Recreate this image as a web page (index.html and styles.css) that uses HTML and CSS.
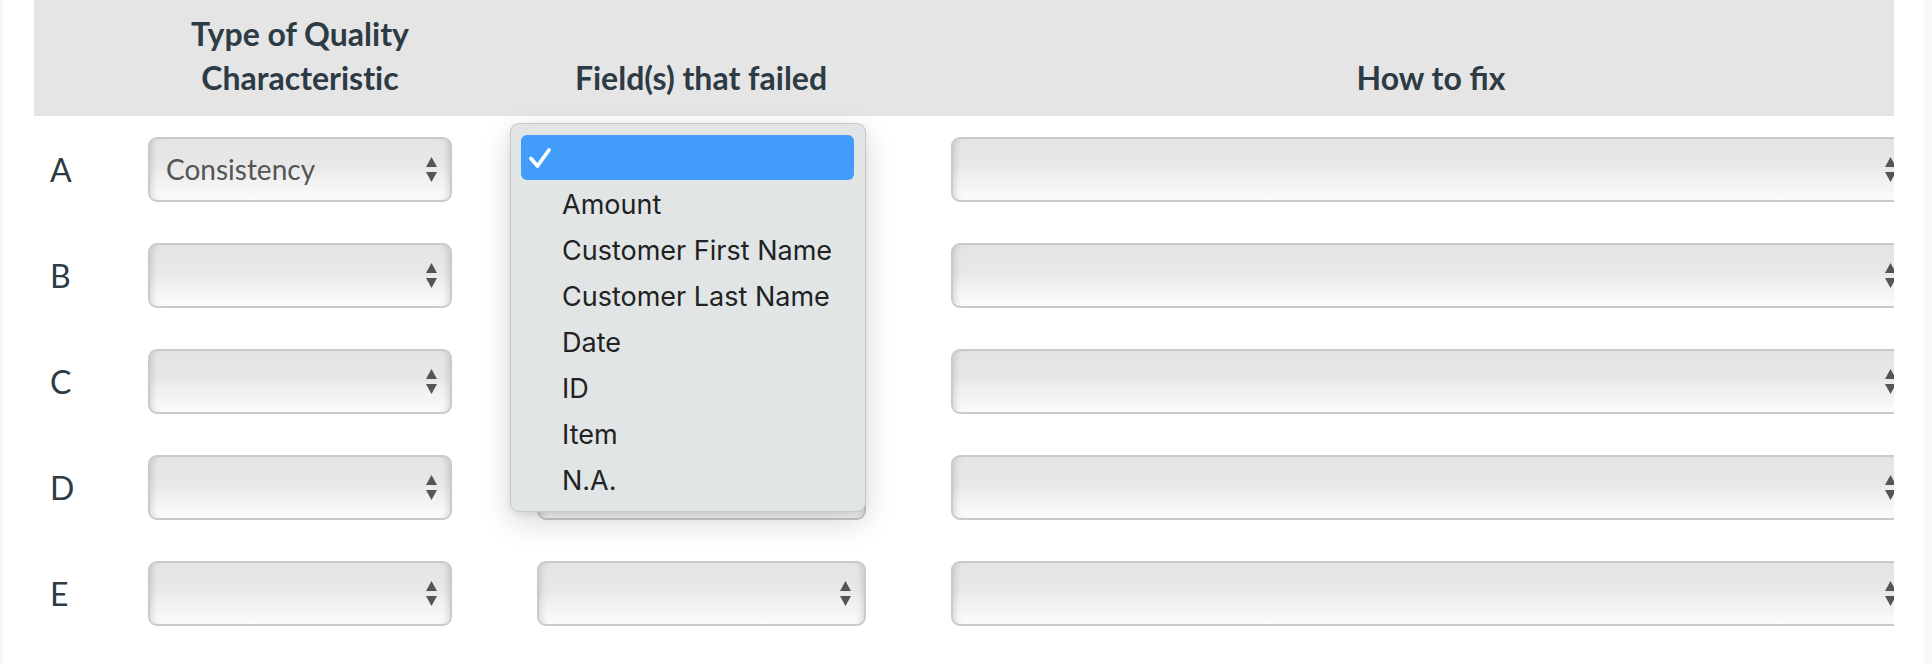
FILE: index.html
```html
<!DOCTYPE html>
<html lang="en">
<head>
<meta charset="utf-8">
<title>Quality characteristics</title>
<link rel="stylesheet" href="styles.css">
</head>
<body>
<div class="page">
  <div class="frame">
    <div class="scroller">
      <div class="grid">
        <div class="th th-letter"></div>
        <div class="th no-liga">Type of Quality<br>Characteristic</div>
        <div class="th">Field(s) that failed</div>
        <div class="th">How to fix</div>

        <div class="letter">A</div>
        <div class="cell c1"><div class="select"><span class="val">Consistency</span><svg class="arrows" viewBox="0 0 11 25"><polygon points="0,10 5.5,0 11,10"/><polygon points="0,15 11,15 5.5,25"/></svg></div></div>
        <div class="cell c2"><div class="select"><span class="val"></span><svg class="arrows" viewBox="0 0 11 25"><polygon points="0,10 5.5,0 11,10"/><polygon points="0,15 11,15 5.5,25"/></svg></div></div>
        <div class="cell c3"><div class="select"><span class="val"></span><svg class="arrows" viewBox="0 0 11 25"><polygon points="0,10 5.5,0 11,10"/><polygon points="0,15 11,15 5.5,25"/></svg></div></div>

        <div class="letter">B</div>
        <div class="cell c1"><div class="select"><span class="val"></span><svg class="arrows" viewBox="0 0 11 25"><polygon points="0,10 5.5,0 11,10"/><polygon points="0,15 11,15 5.5,25"/></svg></div></div>
        <div class="cell c2"><div class="select"><span class="val"></span><svg class="arrows" viewBox="0 0 11 25"><polygon points="0,10 5.5,0 11,10"/><polygon points="0,15 11,15 5.5,25"/></svg></div></div>
        <div class="cell c3"><div class="select"><span class="val"></span><svg class="arrows" viewBox="0 0 11 25"><polygon points="0,10 5.5,0 11,10"/><polygon points="0,15 11,15 5.5,25"/></svg></div></div>

        <div class="letter">C</div>
        <div class="cell c1"><div class="select"><span class="val"></span><svg class="arrows" viewBox="0 0 11 25"><polygon points="0,10 5.5,0 11,10"/><polygon points="0,15 11,15 5.5,25"/></svg></div></div>
        <div class="cell c2"><div class="select"><span class="val"></span><svg class="arrows" viewBox="0 0 11 25"><polygon points="0,10 5.5,0 11,10"/><polygon points="0,15 11,15 5.5,25"/></svg></div></div>
        <div class="cell c3"><div class="select"><span class="val"></span><svg class="arrows" viewBox="0 0 11 25"><polygon points="0,10 5.5,0 11,10"/><polygon points="0,15 11,15 5.5,25"/></svg></div></div>

        <div class="letter">D</div>
        <div class="cell c1"><div class="select"><span class="val"></span><svg class="arrows" viewBox="0 0 11 25"><polygon points="0,10 5.5,0 11,10"/><polygon points="0,15 11,15 5.5,25"/></svg></div></div>
        <div class="cell c2"><div class="select"><span class="val"></span><svg class="arrows" viewBox="0 0 11 25"><polygon points="0,10 5.5,0 11,10"/><polygon points="0,15 11,15 5.5,25"/></svg></div></div>
        <div class="cell c3"><div class="select"><span class="val"></span><svg class="arrows" viewBox="0 0 11 25"><polygon points="0,10 5.5,0 11,10"/><polygon points="0,15 11,15 5.5,25"/></svg></div></div>

        <div class="letter">E</div>
        <div class="cell c1"><div class="select"><span class="val"></span><svg class="arrows" viewBox="0 0 11 25"><polygon points="0,10 5.5,0 11,10"/><polygon points="0,15 11,15 5.5,25"/></svg></div></div>
        <div class="cell c2"><div class="select"><span class="val"></span><svg class="arrows" viewBox="0 0 11 25"><polygon points="0,10 5.5,0 11,10"/><polygon points="0,15 11,15 5.5,25"/></svg></div></div>
        <div class="cell c3"><div class="select"><span class="val"></span><svg class="arrows" viewBox="0 0 11 25"><polygon points="0,10 5.5,0 11,10"/><polygon points="0,15 11,15 5.5,25"/></svg></div></div>
      </div>
    </div>
  </div>

  <div class="menu">
    <div class="opt selected"><svg class="check" viewBox="0 0 22 22"><polyline points="2,11.5 8.5,19 20,3"/></svg></div>
    <div class="opt">Amount</div>
    <div class="opt">Customer First Name</div>
    <div class="opt">Customer Last Name</div>
    <div class="opt">Date</div>
    <div class="opt">ID</div>
    <div class="opt">Item</div>
    <div class="opt">N.A.</div>
  </div>
</div>
</body>
</html>
```

FILE: styles.css
```css
html, body {
  margin: 0;
  padding: 0;
  background: #f8f8f8;
}

.page {
  position: relative;
  width: 1932px;
  height: 664px;
  overflow: hidden;
  font-family: "Lato", "Liberation Sans", sans-serif;
  color: #2d3b45;
}

.frame {
  margin-left: 3px;
  width: 1921px;
  height: 664px;
  background: #ffffff;
}

.scroller {
  margin-left: 31px;
  width: 1860px;
  height: 664px;
  overflow: hidden;
}

.grid {
  display: grid;
  width: 1920px;
  grid-template-columns: 72px 388px 414px 1046px;
  grid-template-rows: 116px repeat(5, 106px);
}

.th {
  background: #e5e5e5;
  font-weight: 700;
  font-size: 32px;
  line-height: 44px;
  text-align: center;
  display: flex;
  align-items: flex-end;
  justify-content: center;
  padding-bottom: 16px;
  box-sizing: border-box;
}

.no-liga {
  font-variant-ligatures: none;
}

.letter {
  display: flex;
  align-items: center;
  padding-left: 16px;
  font-size: 32px;
  color: #2d3b45;
}

.cell {
  display: flex;
  align-items: center;
}

.c1 { padding: 0 42px; }
.c2 { padding: 0 42px 0 43px; }
.c3 { padding: 0 43px; }

.select {
  position: relative;
  flex: 1;
  height: 65px;
  box-sizing: border-box;
  border: 2px solid #cacaca;
  border-radius: 9px;
  background: linear-gradient(to bottom, #e4e4e4 0%, #e8e8e8 48%, #ececec 52%, #fbfbfb 100%);
  box-shadow: inset 7px 0 6px -5px rgba(0,0,0,0.13), inset -7px 0 6px -5px rgba(0,0,0,0.13);
  display: flex;
  align-items: center;
  padding: 0 13px 0 16px;
}

.val {
  flex: 1;
  font-size: 28px;
  color: #555555;
}

.arrows {
  width: 11px;
  height: 25px;
  fill: #555555;
}

.menu {
  position: absolute;
  left: 510px;
  top: 123px;
  width: 356px;
  height: 389px;
  box-sizing: border-box;
  padding: 11px 11px 10px 10px;
  background: #e1e5e6;
  border: 1px solid #c6c8c9;
  border-radius: 9px;
  box-shadow: 0 10px 30px rgba(0,0,0,0.16), 0 2px 6px rgba(0,0,0,0.08);
  font-family: "Inter", "Noto Sans", sans-serif;
  font-size: 27px;
  color: #222222;
}

.opt {
  height: 46px;
  display: flex;
  align-items: center;
  padding-left: 41px;
  border-radius: 6px;
  position: relative;
}

.opt.selected {
  height: 45px;
  margin-bottom: 1px;
  background: #429cf9;
}

.check {
  position: absolute;
  left: 8px;
  top: 12px;
  width: 22px;
  height: 22px;
  fill: none;
  stroke: #ffffff;
  stroke-width: 3.8;
  stroke-linecap: round;
  stroke-linejoin: round;
}
```
